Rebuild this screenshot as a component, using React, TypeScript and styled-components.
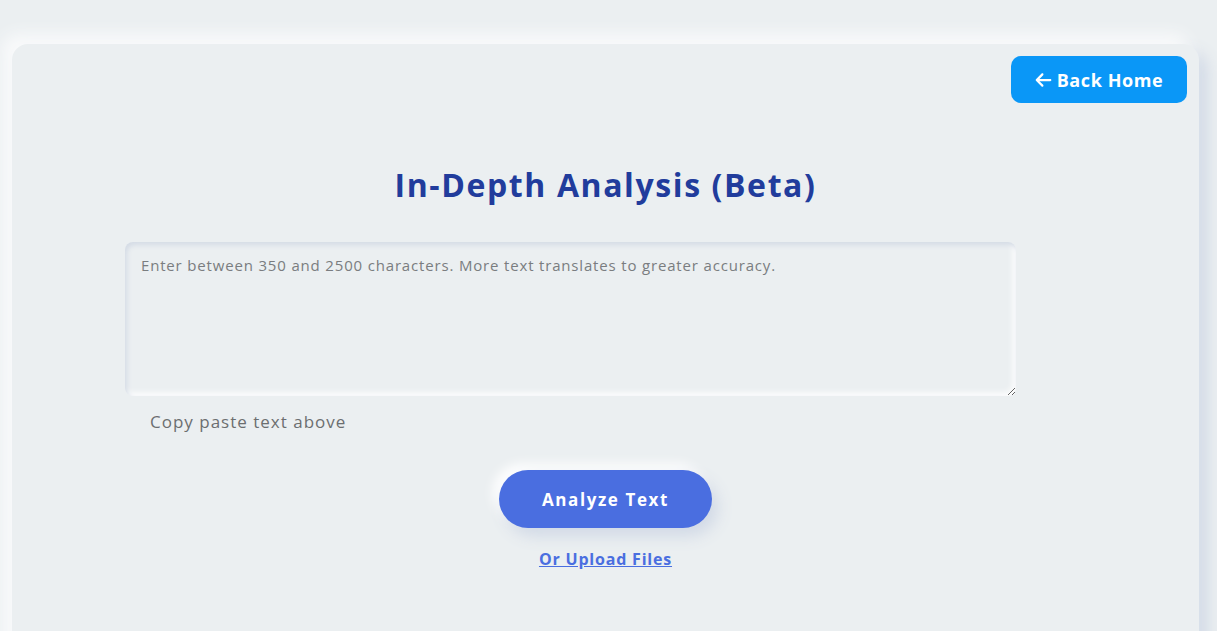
import React from "react"
import styled, { createGlobalStyle } from "styled-components"

const BG = "#ebeff1"
const FONT = `"Open Sans", "Liberation Sans", sans-serif`

const GlobalStyle = createGlobalStyle`
  html, body {
    margin: 0;
    padding: 0;
    background: ${BG};
    font-family: ${FONT};
    overflow: hidden;
  }
`

const Page = styled.div`
  padding: 44px 18px 0 12px;
  height: 631px;
  box-sizing: border-box;
  overflow: hidden;
`

const Card = styled.div`
  display: flex;
  flex-direction: column;
  background: ${BG};
  border-radius: 16px 16px 0 0;
  height: 620px;
  box-shadow: -10px -10px 16px #f9fafb, 8px 8px 16px #d1d9e6;
  padding-top: 12px;
  box-sizing: border-box;
`

const TopBar = styled.div`
  display: flex;
  justify-content: flex-end;
  padding-right: 12px;
`

const BackButton = styled.button`
  display: flex;
  align-items: center;
  justify-content: center;
  gap: 5px;
  width: 176px;
  height: 47px;
  border: none;
  border-radius: 10px;
  background: #0a97f7;
  color: #fff;
  font-family: ${FONT};
  font-weight: 700;
  font-size: 18px;
  letter-spacing: 0.6px;
  cursor: pointer;
`

const Title = styled.h1`
  margin: 62px 0 0 0;
  text-align: center;
  color: #213c9c;
  font-size: 32px;
  font-weight: 700;
  line-height: 40px;
  letter-spacing: 1.6px;
`

const Field = styled.div`
  display: flex;
  flex-direction: column;
  margin: 37px 0 0 113px;
  width: 891px;
`

const TextArea = styled.textarea`
  height: 154px;
  box-sizing: border-box;
  padding: 13px 16px;
  border: none;
  border-radius: 8px;
  background: ${BG};
  box-shadow: inset 2px 3px 5px #d4dbe5, inset -3px -3px 6px #ffffff;
  font-family: ${FONT};
  font-size: 15px;
  letter-spacing: 0.83px;
  color: #333;
  outline: none;

  &::placeholder {
    color: #7a7d80;
  }
`

const Helper = styled.div`
  margin: 14px 0 0 25px;
  font-size: 17px;
  letter-spacing: 1px;
  color: #6b6e70;
`

const Actions = styled.div`
  display: flex;
  flex-direction: column;
  align-items: center;
  margin-top: 37px;
`

const AnalyzeButton = styled.button`
  width: 213px;
  height: 58px;
  border: none;
  border-radius: 29px;
  background: #4a6ee0;
  color: #fff;
  font-family: ${FONT};
  font-weight: 700;
  font-size: 17px;
  letter-spacing: 1.6px;
  box-shadow: 6px 8px 16px #d1d9e6, -6px -6px 12px #ffffff;
  cursor: pointer;
`

const UploadLink = styled.a`
  margin-top: 20px;
  color: #4a6ee0;
  font-weight: 700;
  font-size: 16px;
  letter-spacing: 0.8px;
  text-decoration: underline;
  cursor: pointer;
`

const ArrowLeft = () => (
  <svg width="17" height="18" viewBox="0 0 448 512" fill="currentColor">
    <path d="M9.4 233.4c-12.5 12.5-12.5 32.8 0 45.3l160 160c12.5 12.5 32.8 12.5 45.3 0s12.5-32.8 0-45.3L109.2 288H416c17.7 0 32-14.3 32-32s-14.3-32-32-32H109.3L214.6 118.6c12.5-12.5 12.5-32.8 0-45.3s-32.8-12.5-45.3 0l-160 160z" />
  </svg>
)

export default function App() {
  return (
    <>
      <GlobalStyle />
      <Page>
        <Card>
          <TopBar>
            <BackButton>
              <ArrowLeft />
              Back Home
            </BackButton>
          </TopBar>
          <Title>In-Depth Analysis (Beta)</Title>
          <Field>
            <TextArea placeholder="Enter between 350 and 2500 characters. More text translates to greater accuracy." />
            <Helper>Copy paste text above</Helper>
          </Field>
          <Actions>
            <AnalyzeButton>Analyze Text</AnalyzeButton>
            <UploadLink>Or Upload Files</UploadLink>
          </Actions>
        </Card>
      </Page>
    </>
  )
}
